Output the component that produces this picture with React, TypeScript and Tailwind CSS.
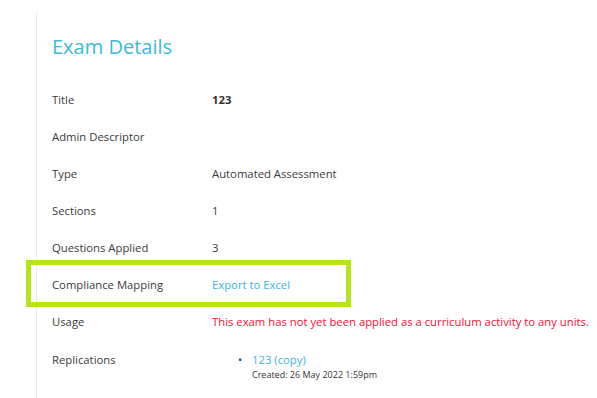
import React from 'react';

const rows: { label: string; value: React.ReactNode }[] = [
  { label: 'Title', value: <span className="font-bold text-[#333]">123</span> },
  { label: 'Admin Descriptor', value: null },
  { label: 'Type', value: 'Automated Assessment' },
  { label: 'Sections', value: '1' },
  { label: 'Questions Applied', value: '3' },
  {
    label: 'Compliance Mapping',
    value: <a className="text-[#3cb4de] cursor-pointer">Export to Excel</a>,
  },
  {
    label: 'Usage',
    value: (
      <span className="text-[#f0102f]">
        This exam has not yet been applied as a curriculum activity to any units.
      </span>
    ),
  },
];

export default function App() {
  return (
    <div
      className="relative w-[597px] h-[398px] overflow-hidden bg-white text-[#3a3a3a]"
      style={{ fontFamily: '"Open Sans", "Liberation Sans", sans-serif' }}
    >
      <div className="ml-[36px] mt-[12px] h-[386px] border-l border-[#ebebeb] pl-[15px] pt-[21px]">
        <h1 className="text-[20px] leading-[28px] font-normal text-[#3db8e0]">Exam Details</h1>
        <div className="mt-[21px] text-[11.3px]">
          {rows.map(row => (
            <div key={row.label} className="flex h-[37px] items-center">
              <div className="w-[160px] shrink-0">{row.label}</div>
              <div className="whitespace-nowrap">{row.value}</div>
            </div>
          ))}
          <div className="flex pt-[10px]">
            <div className="w-[160px] shrink-0 leading-[17px]">Replications</div>
            <ul className="pl-[26px]">
              <li className="flex">
                <span className="w-[14px] text-[11px] leading-[17px] text-[#333]">•</span>
                <div>
                  <a className="block text-[11.3px] leading-[17px] text-[#3cb4de] cursor-pointer">
                    123 (copy)
                  </a>
                  <div className="text-[9px] leading-[14px] text-[#333]">
                    Created: 26 May 2022 1:59pm
                  </div>
                </div>
              </li>
            </ul>
          </div>
        </div>
      </div>
      {/* highlight annotation */}
      <div className="absolute left-[26px] top-[260px] w-[325px] h-[47px] border-[5px] border-[#b6e31b] pointer-events-none" />
    </div>
  );
}
